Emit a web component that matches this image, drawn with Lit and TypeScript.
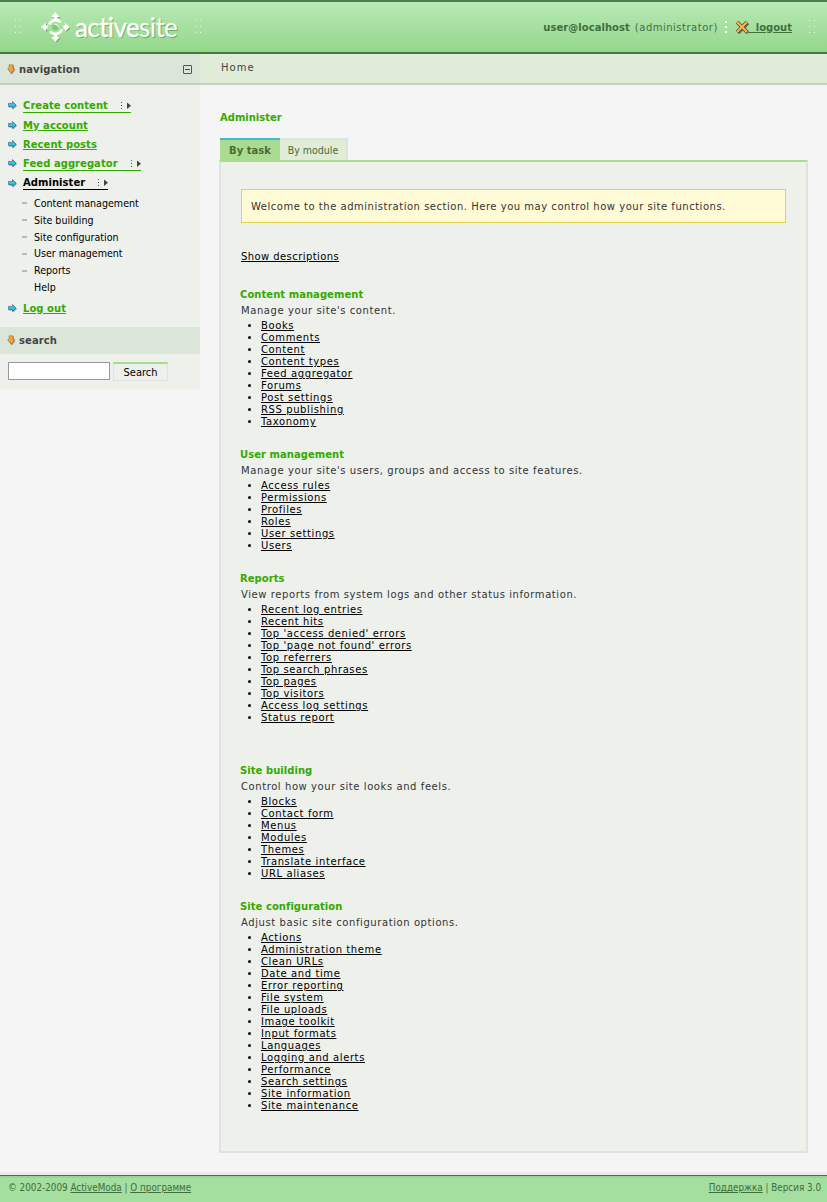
import { LitElement, html, css } from "lit";
import { customElement } from "lit/decorators.js";

const sections: { title: string; desc: string; items: string[] }[] = [
  { title: "Content management", desc: "Manage your site's content.", items: ["Books", "Comments", "Content", "Content types", "Feed aggregator", "Forums", "Post settings", "RSS publishing", "Taxonomy"] },
  { title: "User management", desc: "Manage your site's users, groups and access to site features.", items: ["Access rules", "Permissions", "Profiles", "Roles", "User settings", "Users"] },
  { title: "Reports", desc: "View reports from system logs and other status information.", items: ["Recent log entries", "Recent hits", "Top 'access denied' errors", "Top 'page not found' errors", "Top referrers", "Top search phrases", "Top pages", "Top visitors", "Access log settings", "Status report"] },
  { title: "Site building", desc: "Control how your site looks and feels.", items: ["Blocks", "Contact form", "Menus", "Modules", "Themes", "Translate interface", "URL aliases"] },
  { title: "Site configuration", desc: "Adjust basic site configuration options.", items: ["Actions", "Administration theme", "Clean URLs", "Date and time", "Error reporting", "File system", "File uploads", "Image toolkit", "Input formats", "Languages", "Logging and alerts", "Performance", "Search settings", "Site information", "Site maintenance"] },
];

const dots = html`<svg class="dots" width="6" height="14" viewBox="0 0 6 14" fill="#fff" opacity=".8">
  <rect x="0" y="0" width="1" height="1"/><rect x="5" y="0" width="1" height="1"/>
  <rect x="0" y="6" width="1" height="1"/><rect x="5" y="6" width="1" height="1"/>
  <rect x="0" y="12" width="1" height="1"/><rect x="5" y="12" width="1" height="1"/>
</svg>`;

const sep = html`<svg class="sep" width="2" height="12" viewBox="0 0 2 12" fill="#fff">
  <rect x="0" y="0" width="2" height="2"/><rect x="0" y="5" width="2" height="2"/><rect x="0" y="10" width="2" height="2"/>
</svg>`;

const arrow = html`<svg class="bullet" width="9" height="9" viewBox="0 0 9 9">
  <path d="M5 1 L9 4.8 L5 8.6 V6.6 H1 V3 H5Z" fill="#8f8f8f"/>
  <path d="M4.5 .5 L8 4 L4.5 7.5 V5.6 H.5 V2.4 H4.5Z" fill="#27c6ea" stroke="#35606e" stroke-width=".6"/>
</svg>`;

const drop = html`<svg class="drop" width="9" height="11" viewBox="0 0 9 11">
  <path d="M1 5.5 H2.5 V1.5 H7 V5.5 H8.6 L4.8 10.6Z" fill="#8f8f8f"/>
  <path d="M.6 4.6 H2 V.8 H6 V4.6 H7.6 L4.1 9.2Z" fill="#f2a63a" stroke="#8a6a30" stroke-width=".5"/>
</svg>`;

const more = html`<svg class="more" width="10" height="8" viewBox="0 0 10 8">
  <rect x="0" y="0" width="1" height="1" fill="#555"/><rect x="0" y="3" width="1" height="1" fill="#555"/><rect x="0" y="6" width="1" height="1" fill="#555"/>
  <path d="M6 .5 L10 3.8 L6 7Z" fill="#444"/>
</svg>`;

const logoMark = html`<svg class="mark" width="29" height="30" viewBox="0 0 29 30">
  <g fill="#5f9f5c" transform="translate(.8 .8)">
    <path d="M14.5 0 L19 5 H10Z"/><path d="M14.5 30 L19 25 H10Z"/><path d="M0 15 L5 10.5 V19.5Z"/><path d="M29 15 L24 10.5 V19.5Z"/>
  </g>
  <g fill="#fff">
    <path d="M14.5 0 L19 5 H16.2 V7 H12.8 V5 H10Z"/>
    <path d="M14.5 30 L19 25 H16.2 V23 H12.8 V25 H10Z"/>
    <path d="M0 15 L5 10.5 V13.3 H6.6 V16.7 H5 V19.5Z"/>
    <path d="M29 15 L24 10.5 V13.3 H22.4 V16.7 H24 V19.5Z"/>
  </g>
  <path d="M8 12.5 A7.2 7.2 0 0 1 20 10.5" fill="none" stroke="#fff" stroke-width="2.6"/>
  <path d="M21 17.5 A7.2 7.2 0 0 1 9 19.5" fill="none" stroke="#fff" stroke-width="2.6"/>
  <circle cx="14.5" cy="15" r="3.4" fill="#7cc878"/>
  <path d="M12 12.5 A3.5 3.5 0 0 1 17.5 16.5 A5 5 0 0 0 12 12.5Z" fill="#fff"/>
</svg>`;

const xIcon = html`<svg class="x" width="14" height="14" viewBox="0 0 14 14">
  <path d="M2.5 2.5 L12.5 12.5 M12.5 2.5 L2.5 12.5" stroke="#666" stroke-width="3.4" transform="translate(.6 .6)"/>
  <path d="M2 2 L12 12 M12 2 L2 12" stroke="#5a4a30" stroke-width="3.6"/>
  <path d="M2 2 L12 12 M12 2 L2 12" stroke="#fbb44a" stroke-width="2.2"/>
</svg>`;

@customElement("app-root")
export class AppRoot extends LitElement {
  static styles = css`
    :host { display: block; width: 827px; height: 1202px; background: #f5f5f5; font-family: "DejaVu Sans", Verdana, sans-serif; font-size: 10px; color: #333; overflow: hidden; }
    * { box-sizing: border-box; }
    a { color: inherit; }

    .page { display: flex; flex-direction: column; height: 1202px; }
    .top { height: 54px; flex: none; border-top: 2px solid #47804a; border-bottom: 2px solid #417a43; background: linear-gradient(#b9e9b6, #93d78b); display: flex; align-items: center; padding: 0 12px 0 15px; }
    .top .dots { flex: none; }
    .logo { display: flex; align-items: center; margin-left: 20px; margin-right: 18px; gap: 5px; color: #fff; font-family: "Lato", sans-serif; font-size: 26px; line-height: 30px; letter-spacing: -.6px; text-shadow: 1px 1px 0 #6ca868; }
    .logo b { font-weight: 400; -webkit-text-stroke: .4px #fff; }
    .logo span { font-weight: 400; }
    .spacer { flex: 1; }
    .user { color: #3f6f3d; font-size: 10px; display: flex; align-items: center; }
    .user b { margin-right: 5px; letter-spacing: .05px; }
    .user span { letter-spacing: .5px; }
    .user .sep { margin: 0 8px 0 7px; flex: none; }
    .logout { display: inline-flex; align-items: center; color: #3f6f3d; font-weight: 700; margin-right: 17px; text-decoration: underline; white-space: pre; }
    .logout svg { margin-right: 0; }

    .bar { display: flex; flex: none; height: 31px; }
    .blocktitle { background: #dce6d8; display: flex; align-items: center; padding: 0 7px; font-weight: 700; color: #444; gap: 3px; }
    .bar .blocktitle { width: 200px; border-bottom: 2px solid #c5cfc0; font-size: 10px; letter-spacing: .1px; padding-top: 1px; }
    .crumb { flex: 1; background: #e0ebd8; border-bottom: 2px solid #c5cfc0; padding: 8px 0 0 21px; letter-spacing: 1px; color: #444; font-size: 10px; }
    .collapse { margin-left: auto; margin-right: 1px; width: 9px; height: 9px; border: 1px solid #555; border-radius: 1px; position: relative; }
    .collapse::after { content: ""; position: absolute; left: 1px; right: 1px; top: 3px; height: 1px; background: #444; }

    .body { flex: 1; display: flex; min-height: 0; }
    aside { width: 200px; flex: none; }
    .menu { background: #eef0eb; padding: 11px 0 9px 8px; }
    .mi { display: flex; align-items: center; height: 19.4px; gap: 6px; }
    .mi a { display: inline-flex; align-items: center; font-weight: 700; color: #33aa00; text-decoration: underline; font-size: 10px; letter-spacing: .05px; }
    .mi.exp a { text-decoration: none; border-bottom: 1px solid currentColor; line-height: 12px; margin-top: 1px; }
    .mi .more { margin-left: 13px; }
    .mi.active a { color: #000; }
    .sub { margin: 2px 0 3px 0; padding-left: 14px; display: flex; flex-direction: column; }
    .sub div { height: 16.8px; line-height: 16.8px; font-family: "DejaVu Sans Condensed", "DejaVu Sans", sans-serif; font-size: 10.6px; color: #000; display: flex; align-items: center; }
    .sub i { width: 5px; height: 2px; background: #b5bdb0; margin-right: 7px; flex: none; }
    .sub div.noi { padding-left: 12px; }
    .search-title { height: 27px; font-size: 10px; letter-spacing: .1px; }
    .search { background: #eef0eb; height: 35px; padding: 8px 8px 0; display: flex; gap: 3px; align-items: flex-start; }
    .search input { width: 102px; height: 18px; border: 1px solid #999; background: #fff; padding: 0; margin: 0; }
    .search button { width: 55px; height: 19px; background: #eef0eb; border: 1px solid #e0e2de; border-top: 2px solid #a8dc90; font: 11px "DejaVu Sans Condensed", sans-serif; color: #000; padding: 0; }

    main { flex: 1; padding: 26px 19px 0 20px; display: flex; flex-direction: column; }
    h1 { margin: 0; font-size: 10px; line-height: 14px; color: #33aa00; font-weight: 700; }
    .tabs { display: flex; margin-top: 13px; height: 22px; }
    .tab { display: flex; align-items: center; justify-content: center; font-size: 10.5px; }
    .tab.on { width: 60px; background: #a8dc90; border-top: 2px solid #44bbcc; font-weight: 700; color: #4a6a35; font-size: 10px; }
    .tab.off { width: 68px; background: #e0ecd8; border-top: 2px solid #e0e2de; border-right: 2px solid #e0e2de; color: #4a6a35; font-family: "DejaVu Sans Condensed", sans-serif; }
    .panel { height: 993px; flex: none; margin-left: -1px; background: #eef0eb; border: 2px solid #e0e2de; border-top: 2px solid #a8dc90; padding: 27px 20px 0 20px; }
    .msg { height: 34px; border: 1px solid #e2d648; background: #fffbd6; padding: 0 9px; display: flex; align-items: center; letter-spacing: .52px; color: #333; }
    .show { margin-top: 28px; padding-bottom: 5px; line-height: 12px; letter-spacing: .42px; color: #000; }
    .show a { color: #000; }
    section { margin-top: 20px; }
    section.after { margin-top: 40px; }
    h3 { margin: 0 0 0 -1px; font-size: 10px; line-height: 14px; color: #33aa00; font-weight: 700; letter-spacing: .05px; }
    p { margin: 2px 0 0; line-height: 14px; letter-spacing: .58px; color: #333; }
    ul { margin: 2px 0 0; padding: 0 0 0 20px; list-style: disc; color: #000; }
    li { height: 12px; line-height: 12px; letter-spacing: .6px; }
    li a { color: #000; }

    footer { height: 30px; flex: none; display: flex; align-items: center; justify-content: space-between; border-top: 3px solid #ebebeb; background: #a5df9f; padding: 0 6px 2px 8px; color: #3d6d3b; position: relative; box-shadow: inset 0 1px 0 #47704a, inset 0 3px 0 #9ad494; }
    footer a { color: #3d6d3b; }
    footer .c { font-family: "DejaVu Sans Condensed", sans-serif; font-size: 9.8px; }
  `;

  render() {
    return html`<div class="page">
      <div class="top">
        ${dots}
        <div class="logo">${logoMark}<div><b>active</b><span>site</span></div></div>
        ${dots}
        <div class="spacer"></div>
        <div class="user"><b>user@localhost</b><span>(administrator)</span>${sep}</div>
        <a class="logout" href="#">${xIcon}<span>&nbsp;&nbsp;logout</span></a>
        ${dots}
      </div>
      <div class="bar">
        <div class="blocktitle">${drop} navigation <span class="collapse"></span></div>
        <div class="crumb">Home</div>
      </div>
      <div class="body">
        <aside>
          <div class="menu">
            <div class="mi exp">${arrow}<a href="#">Create content ${more}</a></div>
            <div class="mi">${arrow}<a href="#">My account</a></div>
            <div class="mi">${arrow}<a href="#">Recent posts</a></div>
            <div class="mi exp">${arrow}<a href="#">Feed aggregator ${more}</a></div>
            <div class="mi exp active">${arrow}<a href="#">Administer ${more}</a></div>
            <div class="sub">
              <div><i></i>Content management</div>
              <div><i></i>Site building</div>
              <div><i></i>Site configuration</div>
              <div><i></i>User management</div>
              <div><i></i>Reports</div>
              <div class="noi">Help</div>
            </div>
            <div class="mi">${arrow}<a href="#">Log out</a></div>
          </div>
          <div class="blocktitle search-title">${drop} search</div>
          <div class="search"><input type="text" /><button>Search</button></div>
        </aside>
        <main>
          <h1>Administer</h1>
          <div class="tabs"><div class="tab on">By task</div><div class="tab off">By module</div></div>
          <div class="panel">
            <div class="msg">Welcome to the administration section. Here you may control how your site functions.</div>
            <div class="show"><a href="#">Show descriptions</a></div>
            ${sections.map((s) => html`<section class="${s.title === "Site building" ? "after" : ""}">
              <h3>${s.title}</h3>
              <p>${s.desc}</p>
              <ul>${s.items.map((i) => html`<li><a href="#">${i}</a></li>`)}</ul>
            </section>`)}
          </div>
        </main>
      </div>
      <footer>
        <div class="c">© 2002-2009 <a href="#">ActiveModa</a> | <a href="#">О программе</a></div>
        <div class="c"><a href="#">Поддержка</a> | Версия 3.0</div>
      </footer>
    </div>`;
  }
}
